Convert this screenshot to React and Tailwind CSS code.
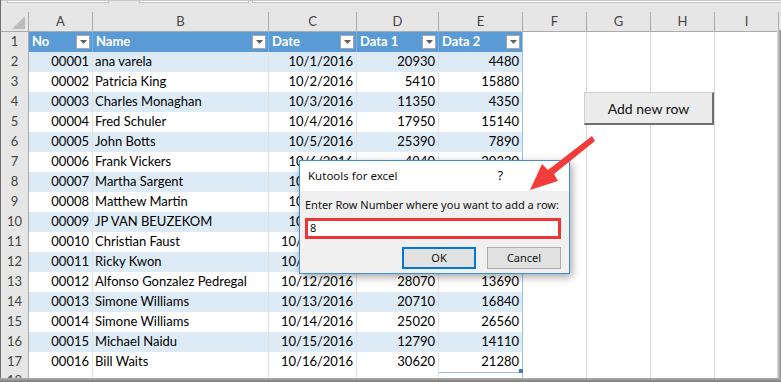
import React from "react";

const cols = "grid grid-cols-[28px_64px_176px_88px_82px_84px_64px_64px_64px_64px]";

const rows = [
  ["00001", "ana varela", "10/1/2016", "20930", "4480"],
  ["00002", "Patricia King", "10/2/2016", "5410", "15880"],
  ["00003", "Charles Monaghan", "10/3/2016", "11350", "4350"],
  ["00004", "Fred Schuler", "10/4/2016", "17950", "15140"],
  ["00005", "John Botts", "10/5/2016", "25390", "7890"],
  ["00006", "Frank Vickers", "10/6/2016", "4940", "20330"],
  ["00007", "Martha Sargent", "10/7/2016", "18470", "9620"],
  ["00008", "Matthew Martin", "10/8/2016", "22150", "11730"],
  ["00009", "JP VAN BEUZEKOM", "10/9/2016", "16380", "24910"],
  ["00010", "Christian Faust", "10/10/2016", "9260", "18450"],
  ["00011", "Ricky Kwon", "10/11/2016", "27340", "6170"],
  ["00012", "Alfonso Gonzalez Pedregal", "10/12/2016", "28070", "13690"],
  ["00013", "Simone Williams", "10/13/2016", "20710", "16840"],
  ["00014", "Simone Williams", "10/14/2016", "25020", "26560"],
  ["00015", "Michael Naidu", "10/15/2016", "12790", "14110"],
  ["00016", "Bill Waits", "10/16/2016", "30620", "21280"],
];

const letters = ["A", "B", "C", "D", "E", "F", "G", "H", "I"];
const heads = ["No", "Name", "Date", "Data 1", "Data 2"];

const FilterBtn = () => (
  <span className="ml-auto mr-[2px] flex h-[14px] w-[14px] items-center justify-center border border-[#a6a6a6] bg-white">
    <svg width="7" height="4" viewBox="0 0 7 4">
      <path d="M0 0h7L3.5 4z" fill="#5f5f5f" />
    </svg>
  </span>
);

const RowNum = ({ n }) => (
  <div className="flex items-center justify-center border-r border-b border-r-[#ababab] border-b-[#d4d4d4] bg-[#e6e6e6] text-[#444]">
    {n}
  </div>
);

const Blank = ({ n }) =>
  [0, 1, 2, 3].map((i) => (
    <div key={n + "-" + i} className="border-r border-b border-[#d9d9d9] bg-white" />
  ));

export default function App() {
  return (
    <div
      className="flex h-[382px] w-[781px] flex-col overflow-hidden bg-[#e6e6e6] text-[13px] text-black"
      style={{ fontFamily: "Lato, 'Noto Sans', sans-serif" }}
    >
      <div className="relative flex flex-1 flex-col border-l border-[#6e6e6e]">
        {/* formula bar bottom */}
        <div className="flex h-[12px] border-t border-[#c8c8c8]">
          <div className="ml-[6px] h-[2px] w-[102px] border-x border-b border-[#c0c0c0] bg-white" />
          <div className="ml-[30px] h-[2px] w-[110px] border-x border-b border-[#c0c0c0] bg-white" />
          <div className="ml-[3px] h-[2px] flex-1 border-l border-b border-[#c0c0c0] bg-white" />
        </div>

        {/* column letters */}
        <div className={cols + " h-[20px] border-b border-[#ababab] text-[13px] text-[#444]"}>
          <div className="relative border-r border-[#ababab]">
            <svg className="absolute bottom-[3px] right-[3px]" width="13" height="13" viewBox="0 0 13 13">
              <path d="M13 0V13H0z" fill="#bcbcbc" />
            </svg>
          </div>
          {letters.map((l) => (
            <div key={l} className="flex items-center justify-center border-r border-[#ababab]">
              {l}
            </div>
          ))}
        </div>

        {/* table header */}
        <div className={cols + " h-[20px]"}>
          <RowNum n={1} />
          {heads.map((h, i) => (
            <div
              key={h}
              className={
                "flex items-center border-b border-r border-b-[#9bc2e6] bg-[#5b9bd5] pl-[3px] font-bold text-white " +
                (i === 4 ? "border-r-[#9bc2e6]" : "border-r-[#76ace0]")
              }
            >
              {h}
              <FilterBtn />
            </div>
          ))}
          <Blank n={1} />
        </div>

        {rows.map((r, i) => {
          const band = i % 2 === 0 ? "bg-[#ddebf7]" : "bg-white";
          const cell = "flex items-center border-b border-r border-b-[#9bc2e6] border-r-[#e2e2e2] " + band;
          return (
            <div key={r[0]} className={cols + " h-[20px]"}>
              <RowNum n={i + 2} />
              <div className={cell + " justify-end pr-[3px]"}>{r[0]}</div>
              <div className={cell + " whitespace-nowrap pl-[2px]"}>{r[1]}</div>
              <div className={cell + " justify-end pr-[3px]"}>{r[2]}</div>
              <div className={cell + " justify-end pr-[3px]"}>{r[3]}</div>
              <div className={cell + " relative justify-end !border-r-[#9bc2e6] pr-[3px]"}>
                {r[4]}
                {i === 15 && (
                  <span className="absolute bottom-[-1px] right-[-1px] h-[4px] w-[4px] bg-[#4472c4]" />
                )}
              </div>
              <Blank n={i + 2} />
            </div>
          );
        })}

        {/* partial row 18 */}
        <div className={cols + " h-[6px] overflow-hidden"}>
          <div className="border-r border-[#ababab] bg-[#e6e6e6] pt-[2px] text-center leading-none text-[#444]">
            18
          </div>
          {[0, 1, 2, 3, 4, 5, 6, 7, 8].map((k) => (
            <div
              key={k}
              className={
                "border-r bg-white " +
                (k < 4 ? "border-[#e2e2e2]" : k === 4 ? "border-[#9bc2e6]" : "border-[#d9d9d9]")
              }
            />
          ))}
        </div>

        {/* right shadow */}
        <div className="absolute right-0 top-[30px] bottom-0 w-[4px] bg-gradient-to-r from-[#e0e0e0] to-[#8a8a8a]" />

        {/* Add new row button */}
        <button className="absolute left-[583px] top-[92px] flex h-[33px] w-[130px] items-center justify-center border border-[#cfcfcf] border-r-2 border-b-2 border-r-[#6f6f6f] border-b-[#6f6f6f] bg-[#ececec] text-[14px] text-[#111]">
          Add new row
        </button>

        {/* dialog */}
        <div
          className="absolute left-[298px] top-[160px] flex h-[114px] w-[271px] flex-col border border-[#3d8fd6] bg-[#f0f0f0] shadow-[2px_3px_8px_rgba(0,0,0,0.35)]"
          style={{ fontFamily: "'Noto Sans', 'Open Sans', sans-serif" }}
        >
          <div className="flex h-[30px] items-center bg-white pl-[8px] text-[11.5px] text-[#111]">
            Kutools for excel
            <span className="ml-[100px] text-[13px]">?</span>
          </div>
          <div className="px-[5px] pt-[5px] text-[11px] text-[#111]">
            <div className="whitespace-nowrap leading-[18px]">Enter Row Number where you want to add a row:</div>
            <div className="mt-[4px] flex h-[21px] w-[256px] items-center border-[3px] border-[#ee3536] bg-white pl-[2px]">
              8
            </div>
            <div className="mt-[8px] flex gap-[11px] pl-[97px]">
              <div className="flex h-[22px] w-[74px] items-center justify-center border-2 border-[#0078d7] bg-[#e1e1e1]">
                OK
              </div>
              <div className="flex h-[22px] w-[74px] items-center justify-center border border-[#adadad] bg-[#e1e1e1]">
                Cancel
              </div>
            </div>
          </div>
        </div>

        {/* arrow */}
        <svg className="absolute left-[500px] top-[120px]" width="110" height="80" viewBox="500 120 110 80">
          <polygon
            points="591,136 594,141 553,174 557,181 529,190 541,164 547,170"
            fill="#f23c3c"
          />
        </svg>
      </div>

      {/* bottom edge */}
      <div className="h-[4px] bg-gradient-to-b from-[#b0b0b0] to-[#7a7a7a]" />
    </div>
  );
}
